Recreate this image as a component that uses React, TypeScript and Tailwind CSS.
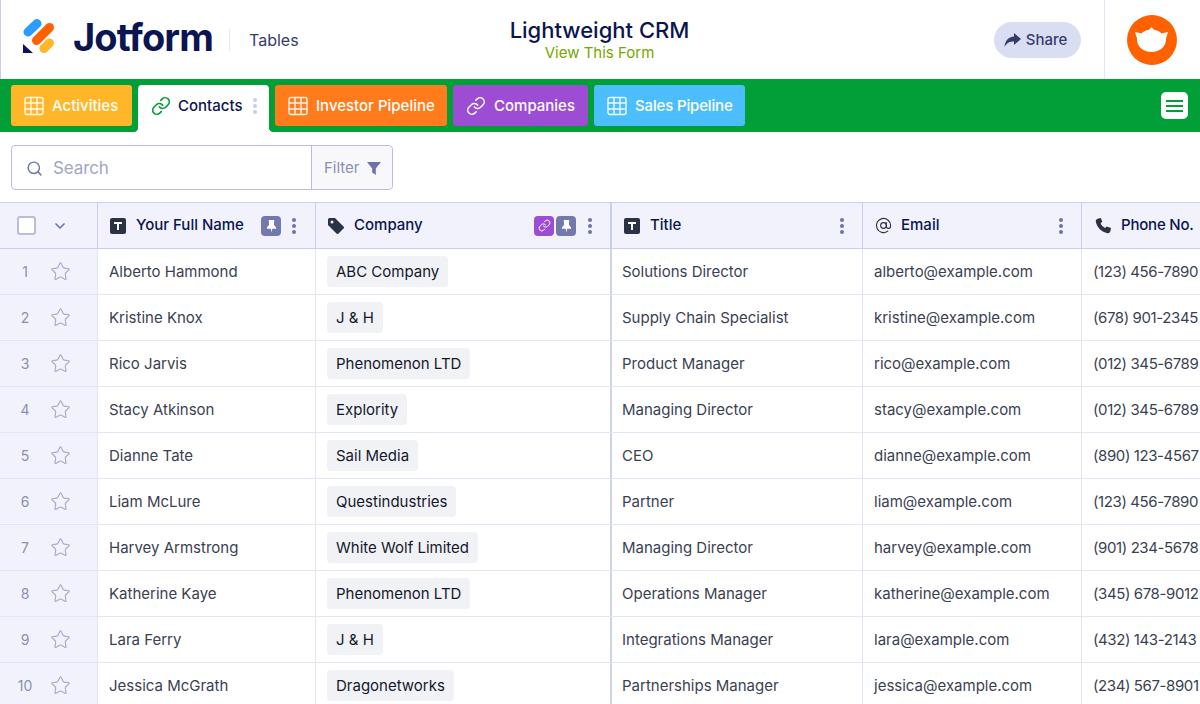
import { AtSign, ChevronDown, Link, Search, Star } from "lucide-react";

const contacts = [
  ["Alberto Hammond", "ABC Company", "Solutions Director", "alberto@example.com", "(123) 456-7890"],
  ["Kristine Knox", "J & H", "Supply Chain Specialist", "kristine@example.com", "(678) 901-2345"],
  ["Rico Jarvis", "Phenomenon LTD", "Product Manager", "rico@example.com", "(012) 345-6789"],
  ["Stacy Atkinson", "Explority", "Managing Director", "stacy@example.com", "(012) 345-6789"],
  ["Dianne Tate", "Sail Media", "CEO", "dianne@example.com", "(890) 123-4567"],
  ["Liam McLure", "Questindustries", "Partner", "liam@example.com", "(123) 456-7890"],
  ["Harvey Armstrong", "White Wolf Limited", "Managing Director", "harvey@example.com", "(901) 234-5678"],
  ["Katherine Kaye", "Phenomenon LTD", "Operations Manager", "katherine@example.com", "(345) 678-9012"],
  ["Lara Ferry", "J & H", "Integrations Manager", "lara@example.com", "(432) 143-2143"],
  ["Jessica McGrath", "Dragonetworks", "Partnerships Manager", "jessica@example.com", "(234) 567-8901"],
];

function GridIcon() {
  return (
    <svg width="20" height="20" viewBox="0 0 20 20" fill="none" stroke="currentColor" strokeWidth="1.4" className="shrink-0 opacity-90">
      <rect x="1" y="1.5" width="18" height="17" rx="2" />
      <path d="M1 7h18M1 13h18M7 1.5v17M13 1.5v17" />
    </svg>
  );
}

function Dots({ color = "text-[#6c73a8]" }: { color?: string }) {
  return (
    <svg width="4" height="16" viewBox="0 0 4 16" fill="currentColor" className={`shrink-0 ${color}`}>
      <circle cx="2" cy="2" r="2" />
      <circle cx="2" cy="8" r="2" />
      <circle cx="2" cy="14" r="2" />
    </svg>
  );
}

function TypeT() {
  return (
    <span className="w-4 h-4 rounded-[2px] bg-[#2b3245] flex items-center justify-center shrink-0">
      <svg width="10" height="10" viewBox="0 0 10 10" fill="#fff">
        <path d="M1 1h8v2H6v6H4V3H1z" />
      </svg>
    </span>
  );
}

function Pin() {
  return (
    <span className="w-5 h-5 rounded bg-[#7279ad] flex items-center justify-center shrink-0">
      <svg width="11" height="14" viewBox="0 0 12 14" fill="#fff">
        <path d="M3 0.500h6l-.4 5 2.400 3v1.500H1V8.500l2.400-3zM5.200 10h1.600L6 14z" />
      </svg>
    </span>
  );
}

function Header({ children, className = "" }: { children: React.ReactNode; className?: string }) {
  return (
    <div className={`flex items-center h-full border-r-[#c8ceed] text-[15px] font-medium text-[#0a1551] ${className}`}>
      {children}
    </div>
  );
}

const columns = "grid grid-cols-[98px_218px_296px_251px_219px_118px]";

export default function App() {
  return (
    <div className="w-[1200px] h-[704px] overflow-hidden bg-white font-['Inter',sans-serif]">
      <header className="h-[79px] flex items-center border-l border-[#c8ceed]">
        <svg width="34" height="36" viewBox="0 0 34 36" className="ml-[21px] mb-[7px] shrink-0" fill="none" strokeWidth="9" strokeLinecap="round">
          <path d="M6 14L15 5.500" stroke="#2b9dff" />
          <path d="M14.500 22.500L27.500 9.500" stroke="#ff6100" />
          <path d="M22 30.500L27.500 25" stroke="#ffb629" />
          <path d="M1 26L11 35H1z" fill="#0a1551" />
        </svg>
        <span className="ml-[17px] mb-[5px] w-[142px] text-[38px] leading-none font-bold tracking-[-0.9px] text-[#0a1551]">Jotform</span>
        <span className="ml-[14px] w-px h-[22px] bg-[#e3e5f5]" />
        <span className="ml-[19px] w-[94px] text-base text-[#343c6a]">Tables</span>
        <div className="flex-1 flex flex-col items-center mb-[2px]">
          <span className="text-[22px] leading-[28px] font-medium text-[#0a1551]">Lightweight CRM</span>
          <span className="text-[15px] leading-[18px] text-[#78a600]">View This Form</span>
        </div>
        <button className="ml-[138px] w-[87px] h-9 pr-1 pt-px rounded-full bg-[#dadef3] flex items-center justify-center gap-[5px] text-[15px] font-medium text-[#343c6a]">
          <svg width="17" height="14" viewBox="0 0 17 14" fill="#343c6a">
            <path d="M10 0l7 6-7 6V8.500C6 8.500 3 9.500 0.500 14 1 8 4.500 3.700 10 3.500z" />
          </svg>
          Share
        </button>
        <div className="ml-[23px] h-full border-l border-[#e3e5f5] w-[96px] flex items-center justify-center pr-[2px]">
          <span className="w-[50px] h-[50px] rounded-full bg-[#ff6100] flex items-center justify-center">
            <svg width="33" height="25" viewBox="0 0 33 25" fill="#fff">
              <path d="M0 5l6.500 1.500C8.500 4.500 11 3.300 14 2.800L16.500 0 19 2.800c3 .5 5.500 1.700 7.500 3.700L33 5l-2 6.500C31.500 19.500 25 25 16.500 25S1.500 19.500 2 11.500z" />
            </svg>
          </span>
        </div>
      </header>

      <nav className="h-[53px] bg-[#029e38] flex items-start pl-[11px] pt-[6px] pr-[12px]">
        <div className="flex items-center gap-2 w-[121px] h-[41px] pl-[13px] pt-px rounded-[3px] bg-[#ffb629] text-white text-[15px] font-medium">
          <GridIcon />
          Activities
        </div>
        <div className="relative flex items-center ml-[6px] w-[131px] h-[47px] pl-[13px] pb-[5px] rounded-t-[4px] bg-white text-[15px] font-medium text-[#0a1551]">
          <Link size={20} strokeWidth={2} className="text-[#029e38] shrink-0" />
          <span className="ml-[7px] w-[75px]">Contacts</span>
          <Dots color="text-[#c8ceed]" />
          <span className="absolute bottom-0 -left-[5px] w-[5px] h-[5px] bg-[radial-gradient(circle_at_0_0,#029e38_5px,#fff_5.500px)]" />
          <span className="absolute bottom-0 -right-[5px] w-[5px] h-[5px] bg-[radial-gradient(circle_at_100%_0,#029e38_5px,#fff_5.500px)]" />
        </div>
        <div className="flex items-center gap-2 ml-[6px] w-[172px] h-[41px] pl-[13px] pt-px rounded-[3px] bg-[#ff7b1c] text-white text-[15px] font-medium">
          <GridIcon />
          Investor Pipeline
        </div>
        <div className="flex items-center gap-2 ml-[6px] w-[135px] h-[41px] pl-[13px] pt-px rounded-[3px] bg-[#9c4dd3] text-white text-[15px] font-medium">
          <Link size={20} strokeWidth={1.8} className="shrink-0" />
          Companies
        </div>
        <div className="flex items-center gap-2 ml-[6px] w-[151px] h-[41px] pl-[13px] pt-px rounded-[3px] bg-[#4dbefc] text-white text-[15px] font-medium">
          <GridIcon />
          <span className="tracking-[-0.15px]">Sales Pipeline</span>
        </div>
        <div className="ml-auto mt-[7px] w-[27px] h-[27px] rounded-[5px] bg-white flex flex-col items-center justify-center gap-[3px]">
          <span className="w-[17px] h-[2px] bg-[#029e38]" />
          <span className="w-[17px] h-[2px] bg-[#029e38]" />
          <span className="w-[17px] h-[2px] bg-[#029e38]" />
        </div>
      </nav>

      <div className="h-[70px] flex items-center pl-[11px] pt-px">
        <div className="flex w-[382px] h-[45px] rounded border border-[#b8bdd9] text-[#979dc6]">
          <div className="flex-1 flex items-center pl-[14px] pt-[2px] gap-[10px] text-[17px]">
            <Search size={17} strokeWidth={2} className="text-[#6c73a8]" />
            <span className="text-[#a0a6c4] tracking-[-0.1px]">Search</span>
          </div>
          <div className="w-[81px] border-l border-[#b8bdd9] bg-[#f8f8fc] flex items-center pl-3 pt-px gap-[7px] rounded-r text-[15px] text-[#8a90b2]">
            Filter
            <svg width="14" height="13" viewBox="0 0 14 13" fill="#6c73a8">
              <path d="M0 0h14L8.800 6.500V13L5.200 10.500V6.500z" />
            </svg>
          </div>
        </div>
      </div>

      <div className={`${columns} h-[47px] bg-[#f1f2fc] border-y border-[#c8ceed] items-center`}>
        <Header className="pl-[17px] border-r">
          <span className="w-[19px] h-[19px] rounded-[3px] border-2 border-[#b8bdd9] bg-white" />
          <ChevronDown size={16} strokeWidth={2.5} className="ml-[16px] text-[#6c73a8]" />
        </Header>
        <Header className="pl-[12px] pr-[19px] border-r">
          <TypeT />
          <span className="ml-[10px] flex-1">Your Full Name</span>
          <Pin />
          <span className="ml-[11px]"><Dots /></span>
        </Header>
        <Header className="pl-[12px] pr-[18px] border-r-2">
          <svg width="16" height="16" viewBox="0 0 16 16" fill="#2b3245" className="shrink-0">
            <path d="M0 1.500A1.500 1.500 0 0 1 1.500 0H7l8.500 8.500a1.500 1.500 0 0 1 0 2.100l-4.900 4.900a1.500 1.500 0 0 1-2.100 0L0 7zM4 5.500a1.500 1.500 0 1 0 0-3 1.500 1.500 0 0 0 0 3z" />
          </svg>
          <span className="ml-[10px] flex-1">Company</span>
          <span className="w-5 h-5 rounded bg-[#9c4dd3] flex items-center justify-center mr-[2px]">
            <Link size={13} strokeWidth={1.8} className="text-white" />
          </span>
          <Pin />
          <span className="ml-[12px]"><Dots /></span>
        </Header>
        <Header className="pl-[12px] pr-[18px] border-r">
          <TypeT />
          <span className="ml-[10px] flex-1">Title</span>
          <Dots />
        </Header>
        <Header className="pl-[12px] pr-[18px] border-r">
          <AtSign size={17} strokeWidth={1.6} className="text-[#2b3245]" />
          <span className="ml-[9px] flex-1">Email</span>
          <Dots />
        </Header>
        <Header className="pl-[13px]">
          <svg width="16" height="16" viewBox="0 0 16 16" fill="#2b3245" className="shrink-0">
            <path d="M3.500 0.500 5.800 0l1.500 3.800-1.700 1.500c.8 2 2.400 3.700 4.500 4.800l1.600-1.600L16 10l-.5 2.800C15.200 14.500 14 15.500 12.500 15.200 6.500 14 2 9.500 0.800 3.500.5 2 1.800.800 3.500.5z" />
          </svg>
          <span className="ml-[10px] whitespace-nowrap tracking-[-0.2px]">Phone No.</span>
        </Header>
      </div>

      {contacts.map((row, i) => (
        <div key={row[0]} className={`${columns} h-[46px] border-b border-[#e3e5f5] items-center text-[15px] text-[#3a3f52]`}>
          <div className="h-full bg-[#f1f2fc] border-r border-[#e3e5f5] flex items-center">
            <span className="w-[50px] text-center text-sm text-[#8a90b2]">{i + 1}</span>
            <Star size={21} strokeWidth={1.3} className="text-[#a7abc9]" />
          </div>
          <div className="h-full border-r border-[#e3e5f5] flex items-center pl-[11px] pt-[2px]">{row[0]}</div>
          <div className="h-full border-r-2 border-[#cfd3ea] flex items-center pl-[11px]">
            <span className="h-[31px] px-[9px] pt-[2px] rounded bg-[#f1f2f6] flex items-center text-[#14182b]">{row[1]}</span>
          </div>
          <div className="h-full border-r border-[#e3e5f5] flex items-center pl-[10px] pt-[2px]">{row[2]}</div>
          <div className="h-full border-r border-[#e3e5f5] flex items-center pl-[11px] pt-[2px]">{row[3]}</div>
          <div className="h-full flex items-center pl-[11px] pt-[2px] whitespace-nowrap tracking-[-0.4px]">{row[4]}</div>
        </div>
      ))}
    </div>
  );
}
